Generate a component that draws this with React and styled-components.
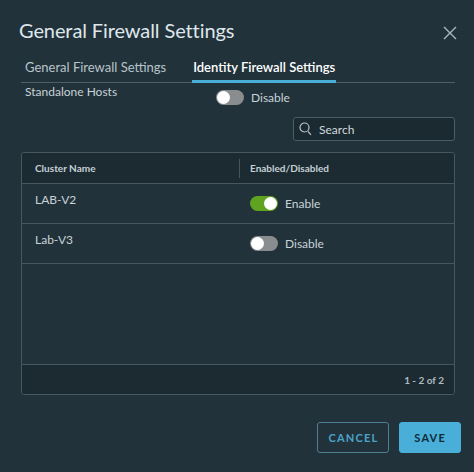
import React from "react";
import styled, { createGlobalStyle } from "styled-components";

const Global = createGlobalStyle`
  html, body { margin: 0; padding: 0; background: #22323b; }
  body { font-family: Lato, "Open Sans", sans-serif; }
  * { box-sizing: border-box; }
`;

const Dialog = styled.div`
  width: 474px;
  height: 472px;
  background: #22323b;
  padding: 18px 18px 0 21px;
  display: flex;
  flex-direction: column;
  color: #dbe3e8;
`;

const Header = styled.div`
  display: flex;
  align-items: center;
  justify-content: space-between;
  margin-left: -2px;
`;

const Title = styled.h1`
  margin: 0;
  font-size: 20px;
  font-weight: 400;
  color: #dfe7eb;
  letter-spacing: -0.1px;
`;

const Close = styled.button`
  background: none;
  border: 0;
  padding: 0;
  width: 14px;
  height: 14px;
  display: flex;
  margin-top: 6px;
  margin-right: -1px;
`;

const Tabs = styled.div`
  display: flex;
  gap: 25px;
  margin-top: 17px;
  padding-left: 3px;
  border-bottom: 1px solid #4d5f68;
  width: 434px;
`;

const Tab = styled.div`
  font-size: 13px;
  padding: 0 1px 5px;
  color: ${(p) => (p.$active ? "#ffffff" : "#b8c4ca")};
  font-weight: ${(p) => (p.$active ? 600 : 400)};
  border-bottom: 3px solid ${(p) => (p.$active ? "#49afd9" : "transparent")};
  margin-bottom: -1px;
`;

const HostRow = styled.div`
  display: flex;
  align-items: flex-start;
  padding-left: 4px;
  margin-top: 1px;
`;

const Label = styled.div`
  font-size: 12px;
  color: #c8d2d7;
  width: 191px;
`;

const ToggleWrap = styled.div`
  display: flex;
  align-items: center;
  gap: 7px;
  margin-top: ${(p) => p.$mt || 0}px;
  font-size: 12px;
  color: #c8d2d7;
`;

const Track = styled.div`
  width: 28px;
  height: 15px;
  border-radius: 8px;
  background: ${(p) => (p.$on ? "#5fa320" : "#8a8d8f")};
  position: relative;
`;

const Knob = styled.div`
  position: absolute;
  top: 1px;
  left: ${(p) => (p.$on ? "14px" : "1px")};
  width: 13px;
  height: 13px;
  border-radius: 50%;
  background: #ffffff;
`;

const Toggle = ({ on, label, mt }) => (
  <ToggleWrap $mt={mt}>
    <Track $on={on}>
      <Knob $on={on} />
    </Track>
    {label}
  </ToggleWrap>
);

const SearchRow = styled.div`
  display: flex;
  justify-content: flex-end;
  width: 434px;
  margin-top: 12px;
`;

const SearchBox = styled.div`
  width: 162px;
  height: 24px;
  border: 1px solid #4b5d66;
  border-radius: 3px;
  background: #1b2930;
  display: flex;
  align-items: center;
  padding-left: 5px;
  gap: 7px;
  font-size: 12px;
  color: #d0d9de;
`;

const Table = styled.div`
  margin-top: 11px;
  width: 434px;
  height: 243px;
  border: 1px solid #46575f;
  border-radius: 3px;
  display: flex;
  flex-direction: column;
  overflow: hidden;
`;

const Grid = styled.div`
  display: grid;
  grid-template-columns: 217px 1fr;
`;

const HeadRow = styled(Grid)`
  height: 31px;
  flex: none;
  background: #1c2b32;
  border-bottom: 1px solid #46575f;
  align-items: center;
  font-size: 10px;
  font-weight: 700;
  color: #c5d0d6;
`;

const HeadCell = styled.div`
  padding-left: ${(p) => (p.$first ? 13 : 10)}px;
  border-left: ${(p) => (p.$first ? "none" : "1px solid #46575f")};
  height: 19px;
  display: flex;
  align-items: center;
`;

const BodyRow = styled(Grid)`
  height: 40px;
  flex: none;
  border-bottom: 1px solid #46575f;
`;

const Cell = styled.div`
  padding: 8px 0 0 13px;
  font-size: 12px;
  color: #c8d2d7;
`;

const ToggleCell = styled.div`
  padding: 12px 0 0 11px;
`;

const Filler = styled.div`
  flex: 1;
  border-bottom: 1px solid #46575f;
`;

const Footer = styled.div`
  height: 29px;
  flex: none;
  background: #1c2a31;
  display: flex;
  align-items: center;
  justify-content: flex-end;
  padding-right: 10px;
  font-size: 10px;
  font-weight: 700;
  color: #aebbc2;
`;

const Actions = styled.div`
  display: flex;
  justify-content: flex-end;
  gap: 10px;
  margin-top: 27px;
  margin-right: -5px;
`;

const Button = styled.button`
  height: 31px;
  padding: 0 ${(p) => (p.$primary ? 14 : 10)}px;
  border-radius: 3px;
  font-family: Lato, sans-serif;
  font-size: 11px;
  font-weight: 700;
  letter-spacing: 1.2px;
  border: 1px solid ${(p) => (p.$primary ? "#49afd9" : "#4f7d91")};
  background: ${(p) => (p.$primary ? "#49afd9" : "transparent")};
  color: ${(p) => (p.$primary ? "#0f2a38" : "#4aa3c8")};
`;

export default function App() {
  const rows = [
    { name: "LAB-V2", on: true },
    { name: "Lab-V3", on: false },
  ];
  return (
    <>
      <Global />
      <Dialog>
        <Header>
          <Title>General Firewall Settings</Title>
          <Close aria-label="close">
            <svg width="14" height="14" viewBox="0 0 14 14">
              <path d="M1 1L13 13M13 1L1 13" stroke="#aab8c0" strokeWidth="1.4" />
            </svg>
          </Close>
        </Header>
        <Tabs>
          <Tab>General Firewall Settings</Tab>
          <Tab $active>Identity Firewall Settings</Tab>
        </Tabs>
        <HostRow>
          <Label>Standalone Hosts</Label>
          <Toggle on={false} label="Disable" mt={6} />
        </HostRow>
        <SearchRow>
          <SearchBox>
            <svg width="13" height="14" viewBox="0 0 13 14" fill="none">
              <circle cx="5.5" cy="5.5" r="4.5" stroke="#b9c5cb" strokeWidth="1.2" />
              <path d="M9 9.5L12 12.8" stroke="#b9c5cb" strokeWidth="1.2" />
            </svg>
            Search
          </SearchBox>
        </SearchRow>
        <Table>
          <HeadRow>
            <HeadCell $first>Cluster Name</HeadCell>
            <HeadCell>Enabled/Disabled</HeadCell>
          </HeadRow>
          {rows.map((r) => (
            <BodyRow key={r.name}>
              <Cell>{r.name}</Cell>
              <ToggleCell>
                <Toggle on={r.on} label={r.on ? "Enable" : "Disable"} />
              </ToggleCell>
            </BodyRow>
          ))}
          <Filler />
          <Footer>1 - 2 of 2</Footer>
        </Table>
        <Actions>
          <Button>CANCEL</Button>
          <Button $primary>SAVE</Button>
        </Actions>
      </Dialog>
    </>
  );
}
